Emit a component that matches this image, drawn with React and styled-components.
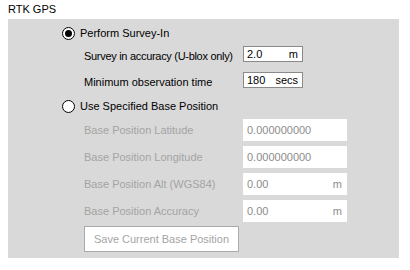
import { Fragment } from 'react'
import styled, { createGlobalStyle } from 'styled-components'

const GlobalStyle = createGlobalStyle`
  body {
    margin: 0;
    background: #ffffff;
    font-family: "Liberation Sans", Arial, sans-serif;
    font-size: 11px;
    color: #000;
  }
`

const Page = styled.div`
  width: 410px;
  height: 270px;
  padding: 0 8px;
  box-sizing: border-box;
`

const Title = styled.div`
  height: 19px;
  line-height: 19px;
`

const Panel = styled.div`
  width: 391px;
  height: 239px;
  background: #d9d9d9;
  box-sizing: border-box;
  padding: 7px 0 0 54px;
  display: flex;
  flex-direction: column;
`

const RadioRow = styled.label`
  display: flex;
  align-items: center;
  gap: 5px;
  height: 14px;
  white-space: nowrap;
  margin-top: ${p => p.$top}px;
`

const RadioCircle = styled.span`
  width: 11px;
  height: 11px;
  border: 1px solid #000;
  border-radius: 50%;
  background: #fff;
  display: flex;
  align-items: center;
  justify-content: center;
  &::after {
    content: '';
    display: ${p => (p.$checked ? 'block' : 'none')};
    width: 7px;
    height: 7px;
    border-radius: 50%;
    background: #000;
  }
`

const Fields = styled.div`
  display: grid;
  grid-template-columns: 159px auto;
  justify-content: start;
  align-items: center;
  row-gap: ${p => p.$gap}px;
  margin: ${p => p.$top}px 0 0 22px;
`

const Label = styled.span`
  white-space: nowrap;
  color: ${p => (p.$disabled ? '#a4a4a4' : '#000')};
  padding-top: ${p => p.$shift || 0}px;
  letter-spacing: ${p => p.$tight || 0}px;
`

const Input = styled.div`
  width: ${p => p.$w}px;
  height: ${p => p.$h}px;
  box-sizing: border-box;
  background: #fff;
  border: 1px solid ${p => (p.$disabled ? '#fff' : '#8a8a8a')};
  display: flex;
  align-items: center;
  justify-content: space-between;
  padding: 0 4px 0 3px;
  color: ${p => (p.$disabled ? '#8c8c8c' : '#000')};
`

const Unit = styled.span`
  color: ${p => (p.$disabled ? '#8c8c8c' : '#000')};
`

const Button = styled.div`
  width: 155px;
  height: 26px;
  box-sizing: border-box;
  margin: 4px 0 0 22px;
  background: #fff;
  border: 1px solid #ababab;
  color: #a4a4a4;
  display: flex;
  align-items: center;
  justify-content: center;
  white-space: nowrap;
`

const baseFields = [
  { label: 'Base Position Latitude', value: '0.000000000' },
  { label: 'Base Position Longitude', value: '0.000000000' },
  { label: 'Base Position Alt (WGS84)', value: '0.00', unit: 'm' },
  { label: 'Base Position Accuracy', value: '0.00', unit: 'm' },
]

export default function App() {
  return (
    <Page>
      <GlobalStyle />
      <Title>RTK GPS</Title>
      <Panel>
        <RadioRow $top={0}>
          <RadioCircle $checked />
          Perform Survey-In
        </RadioRow>
        <Fields $gap={10} $top={6}>
          <Label $shift={3} $tight={-0.3}>Survey in accuracy (U-blox only)</Label>
          <Input $w={60} $h={16}>
            <span>2.0</span>
            <Unit>m</Unit>
          </Input>
          <Label $shift={3}>Minimum observation time</Label>
          <Input $w={60} $h={16}>
            <span>180</span>
            <Unit>secs</Unit>
          </Input>
        </Fields>
        <RadioRow $top={11}>
          <RadioCircle />
          Use Specified Base Position
        </RadioRow>
        <Fields $gap={5} $top={6}>
          {baseFields.map(f => (
            <Fragment key={f.label}>
              <Label $disabled>{f.label}</Label>
              <Input $w={104} $h={22} $disabled>
                <span>{f.value}</span>
                {f.unit && <Unit $disabled>{f.unit}</Unit>}
              </Input>
            </Fragment>
          ))}
        </Fields>
        <Button>Save Current Base Position</Button>
      </Panel>
    </Page>
  )
}
